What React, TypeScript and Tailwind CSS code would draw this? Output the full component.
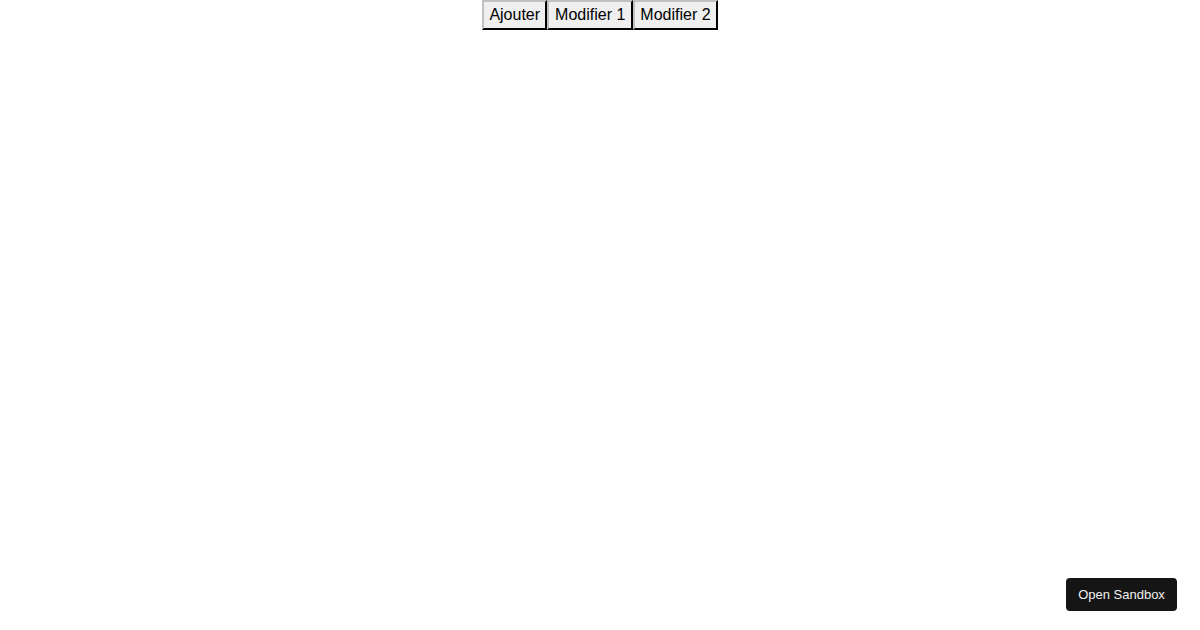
import React from "react";

export default function App() {
  const btn =
    "h-[30px] px-[5px] bg-[#efefef] text-black text-[16px] leading-[18px] border-2 [border-style:outset] border-[#767676] [border-top-color:#c0c0c0] [border-left-color:#c0c0c0] [border-bottom-color:#222] [border-right-color:#222]";
  return (
    <div className="w-[1200px] h-[630px] bg-white relative" style={{ fontFamily: '"Liberation Sans", Arial, sans-serif' }}>
      <div className="flex justify-center">
        <button className={btn}>Ajouter</button>
        <button className={`${btn} px-[6px]`}>Modifier 1</button>
        <button className={btn}>Modifier 2</button>
      </div>
      <div className="absolute right-[23px] bottom-[19px] h-[33px] w-[111px] rounded-[4px] bg-[#151515] text-[#f0f0f0] text-[13px] flex items-center justify-center" style={{ fontFamily: "'Liberation Sans', Arial, sans-serif" }}>
        Open Sandbox
      </div>
    </div>
  );
}
